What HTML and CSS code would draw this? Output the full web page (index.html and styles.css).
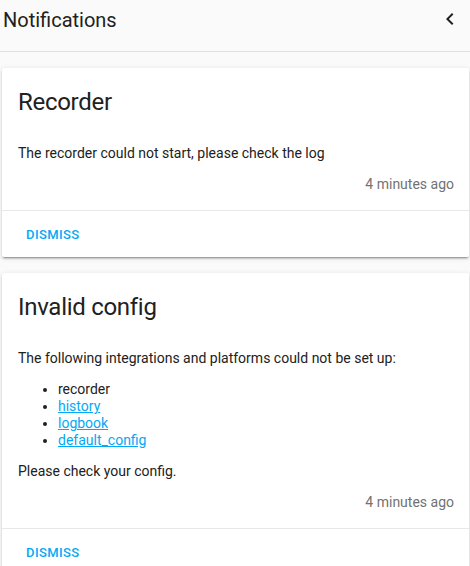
FILE: index.html
```html
<!DOCTYPE html>
<html lang="en">
<head>
<meta charset="utf-8">
<title>Notifications</title>
<link rel="stylesheet" href="styles.css">
</head>
<body>
  <header class="topbar">
    <div class="topbar-title">Notifications</div>
    <button class="icon-btn" aria-label="Close">
      <svg viewBox="0 0 24 24" width="24" height="24"><path d="M15.41,16.58L10.83,12L15.41,7.41L14,6L8,12L14,18L15.41,16.58Z"/></svg>
    </button>
  </header>
  <main class="list">
    <section class="card">
      <div class="card-header">Recorder</div>
      <div class="message">
        <p>The recorder could not start, please check the log</p>
      </div>
      <div class="time">4 minutes ago</div>
      <div class="actions"><button class="text-btn">Dismiss</button></div>
    </section>
    <section class="card">
      <div class="card-header">Invalid config</div>
      <div class="message">
        <p>The following integrations and platforms could not be set up:</p>
        <ul>
          <li>recorder</li>
          <li><a href="#">history</a></li>
          <li><a href="#">logbook</a></li>
          <li><a href="#">default_config</a></li>
        </ul>
        <p>Please check your config.</p>
      </div>
      <div class="time">4 minutes ago</div>
      <div class="actions"><button class="text-btn">Dismiss</button></div>
    </section>
  </main>
</body>
</html>
```
FILE: styles.css
```css
html, body {
  margin: 0;
  padding: 0;
  background: #fafafa;
  font-family: Roboto, "Liberation Sans", sans-serif;
  color: #212121;
  overflow: hidden;
}
.topbar {
  height: 52px;
  box-sizing: border-box;
  border-bottom: 1px solid #e0e0e0;
  display: flex;
  justify-content: space-between;
  align-items: flex-start;
  padding: 0 0 0 3px;
}
.topbar-title {
  font-size: 20px;
  line-height: 20px;
  padding-top: 10px;
  font-weight: 400;
}
.icon-btn {
  border: 0;
  background: none;
  padding: 0;
  margin: 7px 8px 0 0;
  width: 24px;
  height: 24px;
  display: flex;
}
.icon-btn svg { fill: #212121; }
.list {
  padding: 0 1px 0 2px;
}
.card {
  margin-top: 16px;
  background: #fff;
  border-radius: 2px;
  box-shadow: 0 2px 2px 0 rgba(0,0,0,.14), 0 1px 5px 0 rgba(0,0,0,.12), 0 3px 1px -2px rgba(0,0,0,.2);
}
.card-header {
  padding: 18px 16px 0;
  font-size: 24px;
  line-height: 32px;
  font-weight: 400;
  letter-spacing: -0.012em;
}
.message {
  padding: 13px 16px 0;
  font-size: 14px;
  line-height: 17px;
}
.message p { margin: 14px 0; }
.message ul { margin: 14px 0; padding-left: 40px; }
.message a { color: #03a9f4; }
.time {
  font-size: 14px;
  line-height: 17px;
  color: #727272;
  text-align: right;
  padding: 0 15px 17px 16px;
}
.actions {
  border-top: 1px solid #e8e8e8;
  padding: 5px 8px;
  display: flex;
}
.text-btn {
  border: 0;
  background: none;
  height: 36px;
  padding: 0 16px;
  font-family: Roboto, "Liberation Sans", sans-serif;
  font-size: 13px;
  font-weight: 500;
  letter-spacing: 0.4px;
  text-transform: uppercase;
  color: #03a9f4;
}
```
